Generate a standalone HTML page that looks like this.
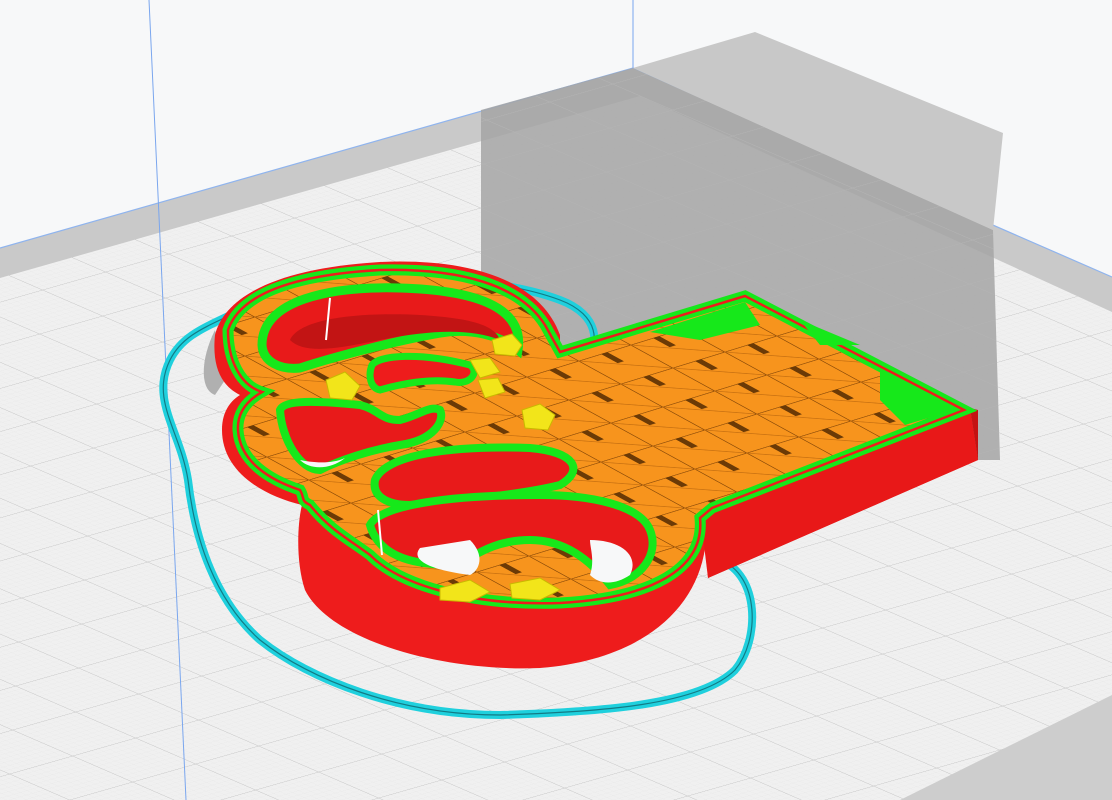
<!DOCTYPE html>
<html><head><meta charset="utf-8"><style>
html,body{margin:0;padding:0;background:#f7f8f9;}
svg{display:block}
</style></head><body>
<svg width="1112" height="800" viewBox="0 0 1112 800" xmlns="http://www.w3.org/2000/svg">
<defs>
<pattern id="fine" patternUnits="userSpaceOnUse" width="10" height="10" patternTransform="matrix(0.63,-0.18,0.6,0.26,0,0)">
<path d="M0 0H10M0 0V10" stroke="#e2e2e2" stroke-width="0.8" fill="none"/>
</pattern>
<pattern id="grid" patternUnits="userSpaceOnUse" width="10" height="10" patternTransform="matrix(6.3,-1.8,6.0,2.6,0,0)">
<path d="M0 0H10M0 0V10" stroke="#c2c2c2" stroke-width="0.2" fill="none"/>
</pattern>
<pattern id="infill" patternUnits="userSpaceOnUse" width="10" height="10" patternTransform="matrix(5.2,-1.6,4.2,2.3,0,0)">
<rect width="10" height="10" fill="#f7941d"/>
<path d="M0 0H10M0 0V10" stroke="#8a4a08" stroke-width="0.35" fill="none"/>
<path d="M0 0L10 10" stroke="#c66f10" stroke-width="0.25"/>
<path d="M5 0L5 4" stroke="#6b3a06" stroke-width="1.2"/>
</pattern>
</defs>
<rect width="1112" height="800" fill="#f7f8f9"/>
<polygon points="0,248 633,68 1112,277 1112,800 0,800" fill="#f0f0f0"/>
<polygon points="0,248 633,68 1112,277 1112,800 0,800" fill="url(#fine)"/>
<polygon points="0,276 640,96 1112,312 1112,800 0,800" fill="url(#grid)"/>
<polygon points="0,248 633,68 1112,277 1112,312 640,96 0,278" fill="#c9c9c9"/>
<polyline points="0,248 633,68 1112,277" fill="none" stroke="#8fb4ee" stroke-width="1.2"/>
<polygon points="900,800 1112,695 1112,800" fill="#cdcdcd"/>
<line x1="149" y1="0" x2="186" y2="800" stroke="#7aa6ee" stroke-width="1"/>
<line x1="633" y1="0" x2="633" y2="68" stroke="#7aa6ee" stroke-width="1"/>
<polygon points="481,110 633,68 993,230 1000,460 481,460" fill="#a5a5a5" fill-opacity="0.85"/>
<polygon points="633,68 755,32 1003,133 993,230" fill="#c8c8c8"/>
<polygon points="481,110 633,68 993,230 1000,460 481,460" fill="url(#grid)" opacity="0.5"/>
<path d="M560,300 C600,315 600,345 585,360 L720,560 C760,575 760,640 735,670 C700,705 600,712 500,715 C400,715 310,680 260,640 C215,600 195,540 188,480 C180,430 150,400 170,360 C185,330 215,325 260,300 C320,270 480,270 560,300 Z" fill="none" stroke="#1fd0dd" stroke-width="8"/>
<path d="M560,300 C600,315 600,345 585,360 L720,560 C760,575 760,640 735,670 C700,705 600,712 500,715 C400,715 310,680 260,640 C215,600 195,540 188,480 C180,430 150,400 170,360 C185,330 215,325 260,300 C320,270 480,270 560,300 Z" fill="none" stroke="#137a85" stroke-width="1.2"/>
<path d="M215,330 C200,360 200,390 215,395 L225,380 Z" fill="#b0b0b0"/>
<path d="M215,335 C225,295 280,268 380,262 C470,258 540,280 560,335 L560,355 L745,292 L970,408 L978,460 L708,578 L706,540 C700,610 640,660 540,668 C440,672 330,640 305,590 C295,560 298,520 302,505 C260,495 222,470 222,430 C222,410 232,400 240,395 C220,385 212,365 215,335 Z" fill="#ee1c1c"/>
<polygon points="700,512 970,408 978,460 708,578" fill="#e81818"/>
<polygon points="970,408 978,410 978,460" fill="#c41212"/>
<path d="M228,330 C240,295 290,275 380,270 C460,268 520,285 545,325 L560,352 L745,296 L964,410 L712,508 L700,518 C705,570 650,598 560,603 C470,606 400,585 370,555 C350,540 330,530 310,505 C300,500 305,498 300,490 C270,480 240,462 238,430 C237,412 248,400 262,392 C240,385 228,360 228,330 Z" fill="url(#infill)" stroke="#16e81a" stroke-width="11"/>
<path d="M228,330 C240,295 290,275 380,270 C460,268 520,285 545,325 L560,352 L745,296 L964,410 L712,508 L700,518 C705,570 650,598 560,603 C470,606 400,585 370,555 C350,540 330,530 310,505 C300,500 305,498 300,490 C270,480 240,462 238,430 C237,412 248,400 262,392 C240,385 228,360 228,330 Z" fill="none" stroke="#ee1c1c" stroke-width="2.5"/>
<polygon points="745,302 650,332 700,340 760,325" fill="#16e81a"/>
<polygon points="880,370 955,410 905,425 880,400" fill="#16e81a"/>
<polygon points="800,320 860,345 820,345" fill="#16e81a"/>
<path d="M262,345 C262,300 330,286 400,288 C470,290 525,305 518,350 C500,335 470,328 440,333 C400,340 340,355 300,368 C280,370 263,362 262,345 Z" fill="#e81a1a" stroke="#16e81a" stroke-width="9"/>
<path d="M290,340 C300,318 360,312 420,315 C470,318 495,325 500,340 C470,328 430,330 380,340 C340,348 305,355 290,340 Z" fill="#c21414"/>
<path d="M330,298 L326,340" stroke="#fff" stroke-width="2"/>
<path d="M372,365 C380,355 420,352 470,365 C480,372 470,385 455,382 C430,378 400,384 380,390 C370,388 368,375 372,365 Z" fill="#ee1c1c" stroke="#16e81a" stroke-width="7"/>
<path d="M280,410 C285,398 330,402 360,405 C380,410 380,420 400,420 C420,415 430,405 440,410 C445,420 435,440 400,445 C370,450 340,460 320,470 C300,470 282,440 280,410 Z" fill="#e81a1a" stroke="#16e81a" stroke-width="8"/>
<path d="M300,460 C310,462 330,465 345,458 C330,470 310,470 300,460 Z" fill="#f7f8f9"/>
<path d="M375,480 C385,455 450,445 530,448 C575,452 585,470 560,485 C520,495 460,500 410,505 C385,505 372,495 375,480 Z" fill="#e81a1a" stroke="#16e81a" stroke-width="8"/>
<path d="M370,525 C380,505 450,495 540,495 C590,495 640,505 650,530 C660,555 640,580 610,585 C590,560 565,540 530,540 C490,540 470,560 455,565 C420,565 380,560 370,525 Z" fill="#e81a1a" stroke="#16e81a" stroke-width="8"/>
<path d="M470,540 C485,555 480,570 470,575 C430,570 410,560 420,548 Z" fill="#f7f8f9"/>
<path d="M590,540 C620,540 640,555 630,575 C615,585 600,585 590,575 C595,560 590,548 590,540 Z" fill="#f7f8f9"/>
<path d="M378,510 L382,555" stroke="#fff" stroke-width="2"/>
<g fill="#f2e51a" stroke="#c9b800" stroke-width="1">
<path d="M492,340 L512,334 L522,345 L515,356 L495,354 Z"/>
<path d="M470,360 L490,358 L500,372 L480,378 Z"/>
<path d="M478,380 L498,378 L505,392 L485,398 Z"/>
<path d="M326,380 L345,372 L360,386 L352,400 L330,398 Z"/>
<path d="M522,410 L540,404 L555,415 L548,430 L525,428 Z"/>
<path d="M440,588 L470,580 L490,592 L470,602 L440,600 Z"/>
<path d="M510,584 L540,578 L560,590 L540,600 L512,598 Z"/>
</g>
</svg>
</body></html>
